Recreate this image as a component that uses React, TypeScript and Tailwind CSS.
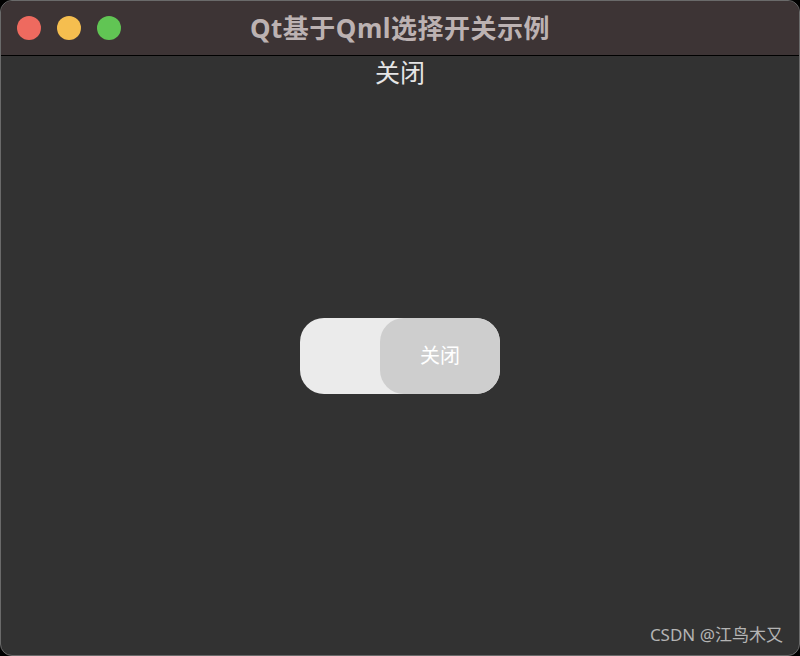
import { useState } from "react"

const FONT = { fontFamily: '"Noto Sans", "Noto Sans CJK SC", sans-serif' }

function TrafficLights() {
  return (
    <div className="flex items-center gap-4 pl-4">
      <span className="block w-6 h-6 rounded-full bg-[#ee6a5f]" />
      <span className="block w-6 h-6 rounded-full bg-[#f5be4f]" />
      <span className="block w-6 h-6 rounded-full bg-[#61c554]" />
    </div>
  )
}

function Toggle({ on, onChange }: { on: boolean; onChange: (v: boolean) => void }) {
  return (
    <button
      onClick={() => onChange(!on)}
      className={`flex w-[200px] h-[76px] rounded-[24px] bg-[#ebebeb] overflow-hidden ${on ? "justify-start" : "justify-end"}`}
    >
      <span className="flex items-center justify-center w-[120px] h-full rounded-[24px] bg-[#cecece] text-white text-[20px]">
        {on ? "开启" : "关闭"}
      </span>
    </button>
  )
}

export default function App() {
  const [on, setOn] = useState(false)
  const label = on ? "开启" : "关闭"

  return (
    <div className="w-[800px] h-[656px] bg-black" style={FONT}>
      <div className="flex flex-col w-full h-full rounded-[12px] border border-[#6a6a6a] overflow-hidden bg-[#323232]">
        {/* title bar */}
        <div className="relative flex items-center h-[55px] bg-[#3d3435] border-b border-black shrink-0">
          <TrafficLights />
          <div className="absolute inset-0 flex items-center justify-center pointer-events-none">
            <span className="text-[26px] font-bold text-[#bcb2b2] tracking-[0.5px]">Qt基于Qml选择开关示例</span>
          </div>
        </div>

        {/* content */}
        <div className="relative flex-1 flex flex-col items-center">
          <div className="text-[25px] leading-[32px] text-[#e6e6e6]">{label}</div>
          <div className="flex-1 flex items-center justify-center pb-[32px]">
            <Toggle on={on} onChange={setOn} />
          </div>
          <div className="absolute right-4 bottom-[8px] text-[17px] text-[#b4b4b4]">CSDN @江鸟木又</div>
        </div>
      </div>
    </div>
  )
}
